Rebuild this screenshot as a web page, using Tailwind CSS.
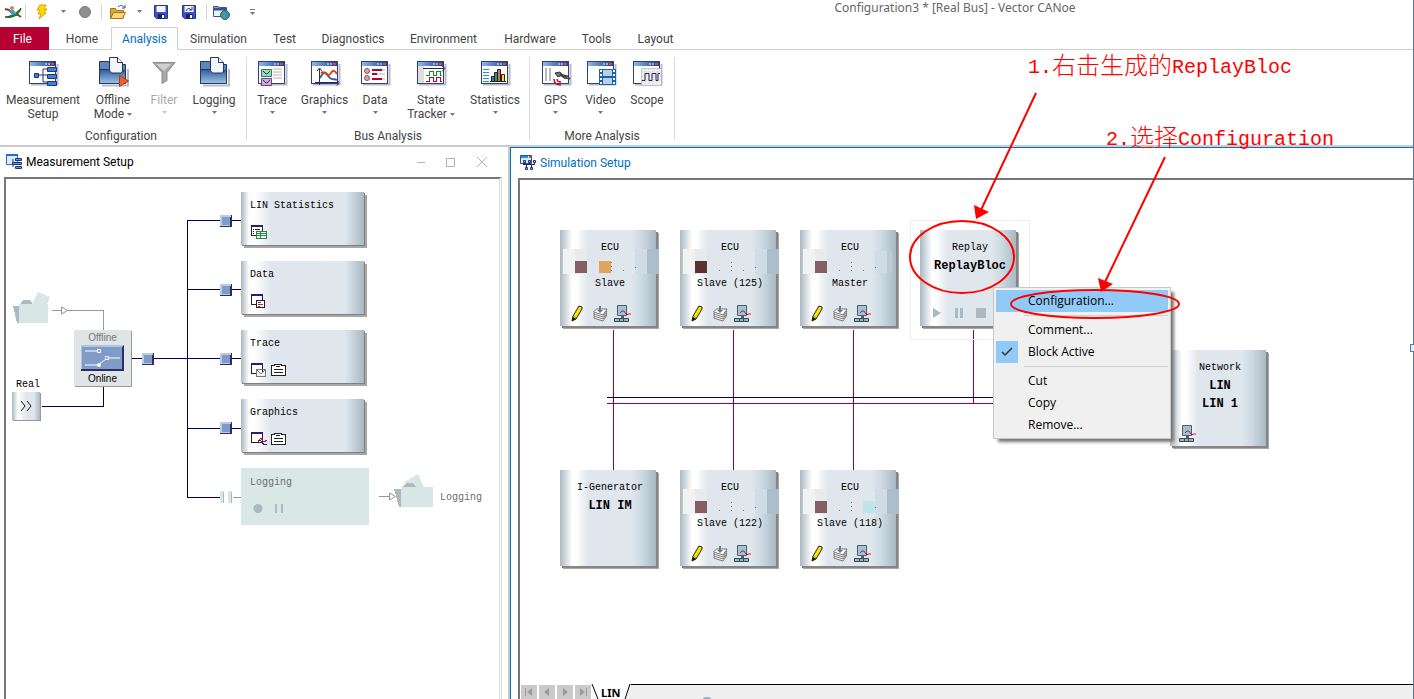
<!DOCTYPE html>
<html lang="en">
  <head>
    <meta charset="utf-8" />
    <meta content="width=device-width, initial-scale=1.0" name="viewport" />
    <title>Configuration3 * [Real Bus] - Vector CANoe</title>
    <script src="https://cdn.jsdelivr.net/npm/@tailwindcss/browser@4"></script>
  </head>
  <body class="relative flex h-screen flex-col overflow-hidden bg-white font-['Roboto',sans-serif] text-[12px] text-[#444]">
    <!-- shared icons -->
    <svg class="absolute h-0 w-0">
      <defs>
        <linearGradient id="bar" x1="0" x2="1">
          <stop offset="0" stop-color="#8fb8ee" />
          <stop offset="1" stop-color="#1c3a8c" />
        </linearGradient>
        <linearGradient id="fold" x1="0" y1="0" x2="0" y2="1">
          <stop offset="0" stop-color="#2f5b9a" />
          <stop offset="1" stop-color="#9cc3e6" />
        </linearGradient>
        <symbol id="caret" viewBox="0 0 5 3"><path d="M0 0h5L2.500 3z" fill="#777" /></symbol>
        <symbol id="win" viewBox="0 0 32 32">
          <path d="M4 27.500h26.500V7" stroke="#b9bcc4" stroke-width="2" fill="none" />
          <rect x="2.500" y="4.500" width="26" height="22" fill="#fff" stroke="#2f3f80" />
          <rect x="3" y="5" width="25" height="4" fill="url(#bar)" />
          <path d="M18 7h2M21 7h2" stroke="#fff" />
          <path d="M24 7h3" stroke="#e8452c" stroke-width="2" />
        </symbol>
        <symbol id="logfolder" viewBox="0 0 32 32">
          <path d="M5 28.500h26V12" stroke="#b9bcc4" stroke-width="2" fill="none" />
          <path d="M2.500 26.500v-22h9l2 3h15v19z" fill="#5c87bd" stroke="#27345f" />
          <path d="M12.500 17V.500h8l5 5V17z" fill="#f4f5f8" stroke="#27345f" />
          <path d="M20.500.500v5h5" fill="#fff" stroke="#27345f" />
          <path d="M2.500 12.500h9l3 3.500h9l5-3.500v14h-26z" fill="url(#fold)" stroke="#27345f" />
        </symbol>
        <symbol id="disk" viewBox="0 0 14 14">
          <path d="M.500.500h13v13H2.500l-2-2z" fill="#3f51c4" stroke="#283593" />
          <path d="M2.500 1h9v6h-9z" fill="#f3f5ff" />
          <path d="M4 9h6.500v5H4z" fill="#1d2360" />
          <path d="M8 10h2v3H8z" fill="#fff" />
        </symbol>
        <symbol id="pencil" viewBox="0 0 12 17">
          <path d="M1 16l1-5L8 1l3 1v2L5 14z" fill="#f7e600" stroke="#222" />
          <path d="M3 11l2 2" stroke="#b59d00" />
          <path d="M1 16l1-4 3 2z" fill="#111" />
        </symbol>
        <symbol id="stack" viewBox="0 0 15 16">
          <g fill="#fff" stroke="#777">
            <path d="M.500 12l3-3H14l-4 6z" />
            <path d="M.500 10l3-3H14l-4 6z" />
            <path d="M.500 8l3-3H14l-4 6z" />
            <path d="M.500 6l3-3H14l-4 6z" />
          </g>
          <path d="M6 0h2v4h2L7 7 4 4h2z" fill="#6f7a80" />
        </symbol>
        <symbol id="pc" viewBox="0 0 17 17">
          <path d="M3.500.500h9v10h-9z" fill="#9cc3d8" stroke="#555d63" />
          <path d="M7 11h3v2H7z" fill="#555d63" />
          <path d="M.500 13.500h14v3H.500zM5.500 13.500h4v3h-4z" fill="#8fb4cc" stroke="#3d4a55" />
          <path d="M6 8l2-2h2l2 3 1 1 1-1h3" fill="none" stroke="#c01838" />
        </symbol>
        <symbol id="folder" viewBox="0 0 38 32">
          <path d="M0 14h6v17H4zM7 13l3-5h7l4 5z" fill="#a9bac2" />
          <path d="M19 12L25 0l12 5-4 10zM6 12h29v19H6z" fill="#d8e6e5" />
        </symbol>
        <symbol id="wsmall" viewBox="0 0 12 11">
          <path d="M.500 1h11v9.500H.500z" fill="#fff" stroke="#222" />
          <path d="M0 1h12" stroke="#2a1f78" stroke-width="2" />
        </symbol>
        <symbol id="filebox" viewBox="0 0 15 12">
          <path d="M.500 1.500h3v-1h7v1h4v10H.500z" fill="#fff" stroke="#222" />
          <path d="M3 5h9M3 8h9M5 2h4" stroke="#222" />
        </symbol>
        <symbol id="tap" viewBox="0 0 12 12">
          <path d="M0 0h12v12H0z" fill="#302c68" />
          <path d="M0 0h11v2h-1v9H0z" fill="#b8cce4" />
          <path d="M1 11h11v1H1z" fill="#302c68" />
          <path d="M2 2h8v8H2z" fill="#809bc8" />
        </symbol>
        <symbol id="mosaic" viewBox="0 0 99 25">
          <path d="M27 2h48v23H27z" fill="#dfe6ec" />
          <path d="M3 0h12v25H3z" fill="#f2f2f3" />
          <path d="M15 0h12v25H15z" fill="#e8ebee" />
          <path d="M75 0h12v25H75z" fill="#d0dce5" />
          <path d="M87 0h12v25H87z" fill="#adbdca" />
          <path d="M39 21h1M51 13h1M51 17h1M51 21h1M63 21h1M75 18h1" stroke="#777" />
        </symbol>
      </defs>
    </svg>

    <header class="flex h-[27px] shrink-0">
      <div class="flex h-[23px] w-[496px] items-center">
        <button class="flex w-[25px] justify-center" aria-label="CANoe">
          <svg class="h-4 w-4.5" viewBox="0 0 18 16">
            <path d="M1 5l4 1 4 4 5 1 3 2" fill="none" stroke="#7a4a22" stroke-width="2" />
            <path d="M1 13c5 0 12-4 16-9-1 6-8 11-16 9z" fill="#2b8a2b" stroke="#1c5c22" />
            <path d="M5 6h5l2 4-4 1z" fill="#4d9ad0" />
            <circle cx="8" cy="4" r="2" fill="#c98a50" />
          </svg>
        </button>
        <span class="h-4 w-px bg-[#d4d4d4]"></span>
        <button class="flex w-8 justify-center" aria-label="Start">
          <svg class="h-4 w-3" viewBox="0 0 12 16"><path d="M4 1h6L8 5h3L8 9h2l-7 6 2-5H2l2-4H1z" fill="#ffd900" stroke="#e0a000" /></svg>
        </button>
        <button class="flex w-2.5 justify-center" aria-label="Start options"><svg class="h-[3px] w-[5px]"><use href="#caret" /></svg></button>
        <button class="flex w-[33px] justify-center" aria-label="Stop"><span class="h-3 w-3 rounded-full border border-[#777] bg-[#8f8f8f]"></span></button>
        <span class="h-4 w-px bg-[#d4d4d4]"></span>
        <button class="flex w-8 justify-center" aria-label="Open">
          <svg class="h-4 w-4.5" viewBox="0 0 18 16">
            <path d="M1.500 14V4.500h5l1 2h7V14z" fill="#e0a63a" stroke="#a87418" />
            <path d="M1.500 14.500l3-6h12l-3 6z" fill="#ffd777" stroke="#a87418" />
            <path d="M9 3c2-2 4-2 6 0M16 1v3h-3" fill="none" stroke="#35507a" />
          </svg>
        </button>
        <button class="flex w-2.5 justify-center" aria-label="Open recent"><svg class="h-[3px] w-[5px]"><use href="#caret" /></svg></button>
        <button class="flex w-[34px] justify-center" aria-label="Save"><svg class="h-3.5 w-3.5"><use href="#disk" /></svg></button>
        <button class="flex w-[22px] justify-center" aria-label="Save as">
          <svg class="h-3.5 w-3.5" viewBox="0 0 14 14">
            <use href="#disk" />
            <path d="M4 6c1-3 4-3 5-1M10 2v3H7" fill="none" stroke="#283593" />
          </svg>
        </button>
        <span class="ml-1.5 h-4 w-px bg-[#d4d4d4]"></span>
        <button class="flex w-[30px] justify-center" aria-label="Options">
          <svg class="h-4 w-4.5" viewBox="0 0 18 16">
            <path d="M.500 12.500v-10h5l1 1h7v9z" fill="#eaf2fb" stroke="#34568c" />
            <path d="M1 5h12" stroke="#34568c" stroke-width="3" />
            <circle cx="12" cy="11" r="4.500" fill="#3f86cc" stroke="#2a5a8e" />
            <path d="M10 8l3 1-1 3 2 2-3 1-2-4z" fill="#4caa48" />
          </svg>
        </button>
        <button class="flex w-[30px] justify-center" aria-label="Customize">
          <svg class="h-1.5 w-[5px]" viewBox="0 0 5 6"><path d="M0 0h5v1H0zM0 3h5L2.500 6z" fill="#777" /></svg>
        </button>
      </div>
      <h1 class="flex-1 text-center font-['Noto_Sans',sans-serif] leading-[15px] text-[#666]">Configuration3 * [Real Bus] - Vector CANoe</h1>
    </header>

    <nav class="flex h-[23px] shrink-0 border-b border-[#d0d0d0] text-center leading-[25px]">
      <a href="#" class="mr-1 h-[23px] w-[49px] bg-[#b70032] pr-1 text-white">File</a>
      <a href="#" class="w-[58px]">Home</a>
      <a href="#" class="h-[23px] w-[67px] border border-b-0 border-[#d0d0d0] bg-white leading-[23px] text-[#0070c0]">Analysis</a>
      <a href="#" class="w-[81px]">Simulation</a>
      <a href="#" class="w-[51px]">Test</a>
      <a href="#" class="w-[86px]">Diagnostics</a>
      <a href="#" class="w-[95px]">Environment</a>
      <a href="#" class="w-[78px]">Hardware</a>
      <a href="#" class="w-[55px]">Tools</a>
      <a href="#" class="w-[63px]">Layout</a>
    </nav>

    <section class="flex h-[97px] shrink-0 border-b-2 border-[#cdcdcd] pt-[7px] leading-[14px]">
      <div class="flex h-[83px] w-[247px] flex-col justify-between border-r border-[#ddd]">
        <div class="flex items-start">
          <button class="flex w-[86px] flex-col items-center gap-1">
            <svg class="h-8 w-8" viewBox="0 0 32 32">
              <use href="#win" />
              <path d="M8 18h13M16 12v13M16 12h5M16 25h5" stroke="#27346b" fill="none" />
              <path d="M7.500 16.500h4v4h-4zM20.500 10.500h9v4h-9zM20.500 17.500h9v4h-9zM20.500 24.500h9v4h-9z" fill="#3d7fd0" stroke="#27346b" />
            </svg>
            <span>Measurement<br />Setup</span>
          </button>
          <button class="flex w-[54px] flex-col items-center gap-1">
            <svg class="h-8 w-8" viewBox="0 0 32 32">
              <use href="#logfolder" />
              <path d="M22.500 18.500v11l9-5.500z" fill="#f0602c" stroke="#b03a14" />
            </svg>
            <span>Offline<br />Mode <svg class="inline h-[3px] w-[5px]"><use href="#caret" /></svg></span>
          </button>
          <button class="flex w-12 flex-col items-center gap-1 text-[#aaa]">
            <svg class="h-8 w-8" viewBox="0 0 32 32">
              <path d="M5 5.500h22l-8 10v8l-5 3v-11z" fill="#a8a8a8" stroke="#8c8c8c" />
              <path d="M8 7h15l-7 7z" fill="#d0d0d0" />
            </svg>
            <span>Filter</span>
            <svg class="h-[3px] w-[5px] opacity-40"><use href="#caret" /></svg>
          </button>
          <button class="flex w-[52px] flex-col items-center gap-1">
            <svg class="h-8 w-8"><use href="#logfolder" /></svg>
            <span>Logging</span>
            <svg class="h-[3px] w-[5px]"><use href="#caret" /></svg>
          </button>
        </div>
        <div class="pr-1 text-center leading-2">Configuration</div>
      </div>

      <div class="flex h-[83px] w-[283px] flex-col justify-between border-r border-[#ddd]">
        <div class="flex items-start">
          <button class="flex w-[50px] flex-col items-center gap-1">
            <svg class="h-8 w-8" viewBox="0 0 32 32">
              <use href="#win" />
              <path d="M17 12h9M17 15h9M17 18h9M17 21h9" stroke="#d8d8d8" stroke-width="2" />
              <path d="M5.500 12.500h10v7h-10z" fill="#9fd8bc" stroke="#27805c" />
              <path d="M5.500 21.500h10v7h-10z" fill="#cbb0dc" stroke="#6c3f88" />
              <path d="M7 14l3 3h1l3-3M7 23l3 3h1l3-3" fill="none" stroke="#333" />
            </svg>
            <span>Trace</span>
            <svg class="h-[3px] w-[5px]"><use href="#caret" /></svg>
          </button>
          <button class="flex w-[55px] flex-col items-center gap-1">
            <svg class="h-8 w-8" viewBox="0 0 32 32">
              <use href="#win" />
              <path d="M10.500 28V12M8 14l2.500-3 2.500 3M6 25.500h23M28 23l2 2.500-2 3" fill="none" stroke="#27275c" />
              <path d="M11 21c5-9 6-5 9-1s5 1 8 3" fill="none" stroke="#3a5d9c" stroke-width="2" />
              <path d="M12 16c4-4 6 6 10 0 2-4 4-2 6 1" fill="none" stroke="#d8401c" stroke-width="2" />
            </svg>
            <span>Graphics</span>
            <svg class="h-[3px] w-[5px]"><use href="#caret" /></svg>
          </button>
          <button class="flex w-[46px] flex-col items-center gap-1">
            <svg class="h-8 w-8" viewBox="0 0 32 32">
              <use href="#win" />
              <path d="M13 13h13M13 17h13M13 22h13" stroke="#d8d8d8" stroke-width="2" />
              <path d="M13 13h10M13 17h5M13 22h10" stroke="#b70032" stroke-width="2" />
              <circle cx="8" cy="14" r="2.500" fill="#c9b0b0" stroke="#a24b4b" />
              <circle cx="8" cy="21" r="2.500" fill="#c9b0b0" stroke="#a24b4b" />
            </svg>
            <span>Data</span>
            <svg class="h-[3px] w-[5px]"><use href="#caret" /></svg>
          </button>
          <button class="flex w-[66px] flex-col items-center gap-1">
            <svg class="h-8 w-8" viewBox="0 0 32 32">
              <use href="#win" />
              <path d="M3 9h6v17H3z" fill="#ddd" />
              <path d="M8 11.500h21M27 9l3 2.500-3 3" fill="none" stroke="#27275c" />
              <g fill="none" shape-rendering="crispEdges">
                <path d="M11 18.500h3v-4h4v4h3v-4h4v4h2" stroke="#0a9a0a" />
                <path d="M11 24.500h3v-4h4v4h3v-4h4v4h2" stroke="#c00030" />
              </g>
            </svg>
            <span>State<br />Tracker <svg class="inline h-[3px] w-[5px]"><use href="#caret" /></svg></span>
          </button>
          <button class="flex w-[62px] flex-col items-center gap-1">
            <svg class="h-8 w-8" viewBox="0 0 32 32">
              <use href="#win" />
              <path d="M4 12.500h6M4 15.500h6M4 18.500h6M4 21.500h6M4 24.500h6" stroke="#1f8fe8" />
              <path d="M11 24.500h16" stroke="#222" />
              <path d="M12.500 19.500h3v5h-3z" fill="#3c78d0" stroke="#222" />
              <path d="M15.500 15.500h3v9h-3z" fill="#2f9c4a" stroke="#222" />
              <path d="M18.500 12.500h3v12h-3z" fill="#cf6a80" stroke="#222" />
              <path d="M22.500 17.500h3v7h-3z" fill="#ffe000" stroke="#222" />
            </svg>
            <span>Statistics</span>
            <svg class="h-[3px] w-[5px]"><use href="#caret" /></svg>
          </button>
        </div>
        <div class="text-center leading-2">Bus Analysis</div>
      </div>

      <div class="flex h-[83px] w-[145px] flex-col justify-between border-r border-[#ddd]">
        <div class="flex items-start">
          <button class="flex w-[51px] flex-col items-center gap-1">
            <svg class="h-8 w-8" viewBox="0 0 32 32">
              <use href="#win" />
              <path d="M5 11h2v13H5zM9 11h2v13H9z" fill="#b8b8b8" />
              <path d="M15 16l5-1 2 3-4 2zM23 18l5 1 2 3-5-1z" fill="#777" stroke="#333" />
              <path d="M20 17l6 4" stroke="#444" stroke-width="3" />
              <path d="M14 22c0 4 3 6 7 6M17 22c0 2 1 3 4 3" fill="none" stroke="#c8102e" stroke-width="1.500" />
            </svg>
            <span>GPS</span>
            <svg class="h-[3px] w-[5px]"><use href="#caret" /></svg>
          </button>
          <button class="flex w-[39px] flex-col items-center gap-1">
            <svg class="h-8 w-8" viewBox="0 0 32 32">
              <use href="#win" />
              <path d="M14 12h17v16H14z" fill="#1762b4" />
              <path d="M18 13h9v6h-9zM18 21h9v6h-9z" fill="#bcd0e4" />
              <path d="M16 13v15M29 13v15" stroke="#fff" stroke-width="2" stroke-dasharray="2 2" />
            </svg>
            <span>Video</span>
            <svg class="h-[3px] w-[5px]"><use href="#caret" /></svg>
          </button>
          <button class="flex w-[54px] flex-col items-center gap-1">
            <svg class="h-8 w-8" viewBox="0 0 32 32">
              <use href="#win" />
              <path d="M10.500 11.500h20v17h-20z" fill="#f1f1f1" stroke="#999" stroke-dasharray="1 1" />
              <path d="M14 12v16M18 12v16M22 12v16M26 12v16M11 15h19M11 19h19M11 23h19" stroke="#ccc" stroke-dasharray="1 1" />
              <path d="M11 23.500h3v-7h4v7h3v-7h4v7h2v-7h2" fill="none" stroke="#27275c" />
            </svg>
            <span>Scope</span>
          </button>
        </div>
        <div class="text-center leading-2">More Analysis</div>
      </div>
    </section>

    <main class="flex min-h-0 flex-1">
      <section class="flex w-[510px] shrink-0 flex-col border-r-2 border-[#c8c8c8]">
        <div class="flex h-[30px] items-center gap-1 pl-1.5 text-black">
          <svg class="h-4 w-4" viewBox="0 0 16 16">
            <path d="M.500.500h11v10H.500z" fill="#d6ecff" stroke="#2b6cc4" />
            <path d="M0 1h12" stroke="#2b6cc4" stroke-width="2" />
            <path d="M7 5v8M7 9h2" stroke="#27346b" />
            <path d="M9.500 4.500h6v2h-6zM6.500 8.500h9v2h-9zM9.500 12.500h6v2h-6z" fill="#5f9be0" stroke="#27346b" />
          </svg>
          <h2 class="flex-1">Measurement Setup</h2>
          <div class="flex w-[91px] items-center gap-[21px] text-[#aaa]">
            <button class="h-px w-2 bg-[#b5b5b5]" aria-label="Minimize"></button>
            <button class="h-[9px] w-[9px] border border-[#b5b5b5]" aria-label="Maximize"></button>
            <button aria-label="Close">
              <svg class="h-3 w-3" viewBox="0 0 12 12"><path d="M1 1l10 10M11 1L1 11" stroke="#b5b5b5" /></svg>
            </button>
          </div>
        </div>
        <div class="relative mr-1.5 ml-1 flex-1 border-t-2 border-r-3 border-l-2 border-t-[#777] border-r-[#ddd] border-l-[#777] [border-right-style:double] font-['Liberation_Mono',monospace] text-[10px] text-black">
          <svg class="absolute inset-0 h-full w-full" shape-rendering="crispEdges">
            <g transform="translate(-6 -179)">
              <g fill="none" stroke="#000060" transform="translate(.500 .500)">
                <path d="M241 220H187V497h33M187 289h54M131 358h110M187 428h54M41 406h62v-20" />
                <path d="M51 310h52v20M232 497h9M378 496h12" stroke="#999" />
              </g>
              <path d="M61.500 307v7l6-3.500zM389.500 493v7l6-3.500z" fill="#fff" stroke="#8b959c" shape-rendering="auto" />
              <use href="#tap" x="220" y="215" width="12" height="12" />
              <use href="#tap" x="220" y="284" width="12" height="12" />
              <use href="#tap" x="220" y="353" width="12" height="12" />
              <use href="#tap" x="220" y="422" width="12" height="12" />
              <use href="#tap" x="142" y="353" width="12" height="12" />
              <path d="M220 491h4v12h-4zM228 491h4v12h-4z" fill="#d8e6e5" />
              <path d="M223 492h1v11h-1zM231 492h1v11h-1z" fill="#a9bac2" />
              <use href="#folder" x="13" y="292" width="38" height="32" />
              <path d="M394 489h7v18h-2zM403 487l3-4h9l4 4z" fill="#a9bac2" />
              <path d="M403 483l15-9 6 13h-8l-3-4h-7zM401 487h32v20h-32z" fill="#d8e6e5" />
            </g>
          </svg>

          <span class="absolute top-[200px] left-[10px] leading-3">Real</span>
          <button class="absolute top-[213px] left-[6px] flex h-7 w-7 items-center justify-center bg-[linear-gradient(90deg,#a9b8c2,#fff_6px,#e0e6ed_14px,#dfe6ec_22px,#a9b8c2)] shadow-[1px_1px_0_#999]" aria-label="Real bus">
            <svg class="h-3 w-3" viewBox="0 0 12 12"><path d="M1 1l4 5-4 5M7 1l4 5-4 5" fill="none" stroke="#111" /></svg>
          </button>
          <button class="absolute top-[151px] left-[68px] flex h-14 w-[57px] flex-col items-center justify-between bg-[#dfe4e6] font-['Liberation_Sans',sans-serif] leading-[15px] shadow-[1px_1px_0_#999]">
            <span class="text-[#777]">Offline</span>
            <svg class="h-[26px] w-[43px]" viewBox="0 0 43 26">
              <path d="M0 0h43v26H0z" fill="#302c68" />
              <path d="M0 0h43l-2 2v22H0z" fill="#b0c4e0" />
              <path d="M1 2h40v22H1z" fill="#809bc8" />
              <path d="M4 6h12M28 13h11M4 20h13l8-6" fill="none" stroke="#fff" />
              <path d="M16.500 4.500h3v3h-3zM24.500 11.500h3v3h-3z" fill="#809bc8" stroke="#fff" />
              <circle cx="18" cy="20" r="2" fill="#fff" />
            </svg>
            <span>Online</span>
          </button>

          <button class="absolute top-[13px] left-[235px] flex h-[53px] w-[123px] flex-col justify-between bg-[linear-gradient(90deg,#a9b8c2,#fff_8px,#fff_14px,#e0e6ed_30px,#dfe6ec_104px,#ccd9e2_110px,#a9b8c2)] px-[9px] pt-2 pb-1 text-left leading-3 shadow-[1px_1px_0_#808080,3px_3px_0_#aaa6a3]">
            <span>LIN Statistics</span>
            <svg class="h-4 w-[34px]" viewBox="0 0 34 16" shape-rendering="crispEdges">
              <use href="#wsmall" x="1" width="12" height="11" />
              <path d="M3 4.500h1M5 4.500h5M3 6.500h1M3 8.500h1" stroke="#222" />
              <path d="M6.500 6.500h10v7h-10zM6.500 8.500h10M6.500 10.500h10M10.500 6.500v7" fill="#fff" stroke="#1f8a3a" />
            </svg>
          </button>
          <button class="absolute top-[82px] left-[235px] flex h-[53px] w-[123px] flex-col justify-between bg-[linear-gradient(90deg,#a9b8c2,#fff_8px,#fff_14px,#e0e6ed_30px,#dfe6ec_104px,#ccd9e2_110px,#a9b8c2)] px-[9px] pt-2 pb-1 text-left leading-3 shadow-[1px_1px_0_#808080,3px_3px_0_#aaa6a3]">
            <span>Data</span>
            <svg class="h-4 w-[34px]" viewBox="0 0 34 16" shape-rendering="crispEdges">
              <use href="#wsmall" x="1" width="12" height="11" />
              <path d="M6.500 6.500h8v7h-8z" fill="#fff" stroke="#222" />
              <path d="M8 8.500h3M8 10.500h5M8 12.500h2" stroke="#b02840" />
            </svg>
          </button>
          <button class="absolute top-[151px] left-[235px] flex h-[53px] w-[123px] flex-col justify-between bg-[linear-gradient(90deg,#a9b8c2,#fff_8px,#fff_14px,#e0e6ed_30px,#dfe6ec_104px,#ccd9e2_110px,#a9b8c2)] px-[9px] pt-2 pb-1 text-left leading-3 shadow-[1px_1px_0_#808080,3px_3px_0_#aaa6a3]">
            <span>Trace</span>
            <svg class="h-4 w-[38px]" viewBox="0 0 38 16" shape-rendering="crispEdges">
              <use href="#wsmall" x="1" width="12" height="11" />
              <path d="M6.500 6.500h9v7h-9zM7 7l4 4 4-4" fill="#f2f2f2" stroke="#777" />
              <use href="#filebox" x="21" y="1" width="15" height="12" />
            </svg>
          </button>
          <button class="absolute top-[220px] left-[235px] flex h-[53px] w-[123px] flex-col justify-between bg-[linear-gradient(90deg,#a9b8c2,#fff_8px,#fff_14px,#e0e6ed_30px,#dfe6ec_104px,#ccd9e2_110px,#a9b8c2)] px-[9px] pt-2 pb-1 text-left leading-3 shadow-[1px_1px_0_#808080,3px_3px_0_#aaa6a3]">
            <span>Graphics</span>
            <svg class="h-4 w-[38px]" viewBox="0 0 38 16" shape-rendering="crispEdges">
              <use href="#wsmall" x="1" width="12" height="11" />
              <path d="M8 10l3-4 3 4 3-2" fill="none" stroke="#c01838" />
              <path d="M8 8l3 1 3 4 3-1" fill="none" stroke="#2a1f78" />
              <use href="#filebox" x="21" y="1" width="15" height="12" />
            </svg>
          </button>
          <button class="absolute top-[289px] left-[235px] flex h-[57px] w-32 flex-col justify-between bg-[#d9e7e5] px-[9px] pt-[9px] pb-3 text-left leading-3 text-[#6b7070]">
            <span>Logging</span>
            <svg class="h-[9px] w-[34px]" viewBox="0 0 34 9" fill="#a9bac2"><circle cx="8" cy="4.500" r="4.500" /><path d="M25 0h2v9h-2zM31 0h2v9h-2z" /></svg>
          </button>
          <span class="absolute top-[313px] left-[434px] leading-3 text-[#6b7070]">Logging</span>
        </div>
      </section>

      <section class="flex min-w-0 flex-1 flex-col border-t border-l border-[#0070c0]">
        <div class="flex h-[30px] shrink-0 items-center gap-1 pl-[9px] text-[#0070c0]">
          <svg class="h-4 w-4" viewBox="0 0 16 16">
            <path d="M.500.500h11v8H.500z" fill="#d6ecff" stroke="#2b4c94" />
            <path d="M1 2h7" stroke="#2b8ce4" stroke-width="2" />
            <path d="M9 2h2" stroke="#e8452c" stroke-width="2" />
            <path d="M3 9.500h12M4.500 6v4M9.500 6v4M14.500 6v4M6.500 10v4M11.500 10v4" stroke="#27275c" />
            <path d="M3.500 5.500h2v2h-2zM8.500 5.500h2v2h-2zM13.500 5.500h2v2h-2zM5.500 12.500h2v2h-2zM10.500 12.500h2v2h-2z" fill="#a9b8dc" stroke="#27346b" />
          </svg>
          <h2>Simulation Setup</h2>
        </div>
        <div class="ml-[7px] flex min-h-0 flex-1 flex-col border-t-2 border-l-2 border-[#777]">
          <div class="relative min-h-0 flex-1 overflow-hidden font-['Liberation_Mono',monospace] text-[10px] leading-[18px] text-black">
            <svg class="absolute inset-0 h-full w-full" shape-rendering="crispEdges">
              <g transform="translate(-519.500 -179.500)" fill="none" stroke="#a8002e">
                <path d="M613 329v142M733 329v142M853 329v142M973 329v74M606 403h400" />
                <path d="M606 397h400" stroke="#000060" />
              </g>
            </svg>

            <button class="absolute top-[50px] left-[40px] flex h-24 w-24 flex-col items-center bg-[linear-gradient(90deg,#a9b8c2,#fff_12px,#fff_16px,#e0e6ed_28px,#dfe6ec_72px,#ccd9e2_82px,#a9b8c2)] pt-[9px] pl-1 shadow-[2px_2px_0_#858585,3px_3px_0_#aaa6a3]">
              <span>ECU</span>
              <svg class="absolute top-[19px] left-0 h-[25px] w-[99px]" viewBox="0 0 99 25" shape-rendering="crispEdges"><use href="#mosaic" /><path d="M15 12h12v12H15z" fill="#855f64" /><path d="M39 12h12v12H39z" fill="#dfa45d" /></svg>
              <span class="mt-[18px]">Slave</span>
              <span class="absolute bottom-1 left-[11px] flex items-center gap-2.5">
                <svg class="h-[17px] w-3"><use href="#pencil" /></svg>
                <svg class="h-4 w-[15px]"><use href="#stack" /></svg>
                <svg class="-ml-1 h-[17px] w-[17px]"><use href="#pc" /></svg>
              </span>
            </button>
            <button class="absolute top-[50px] left-[160px] flex h-24 w-24 flex-col items-center bg-[linear-gradient(90deg,#a9b8c2,#fff_12px,#fff_16px,#e0e6ed_28px,#dfe6ec_72px,#ccd9e2_82px,#a9b8c2)] pt-[9px] pl-1 shadow-[2px_2px_0_#858585,3px_3px_0_#aaa6a3]">
              <span>ECU</span>
              <svg class="absolute top-[19px] left-0 h-[25px] w-[99px]" viewBox="0 0 99 25" shape-rendering="crispEdges"><use href="#mosaic" /><path d="M15 12h12v12H15z" fill="#5a3236" /></svg>
              <span class="mt-[18px]">Slave (125)</span>
              <span class="absolute bottom-1 left-[11px] flex items-center gap-2.5">
                <svg class="h-[17px] w-3"><use href="#pencil" /></svg>
                <svg class="h-4 w-[15px]"><use href="#stack" /></svg>
                <svg class="-ml-1 h-[17px] w-[17px]"><use href="#pc" /></svg>
              </span>
            </button>
            <button class="absolute top-[50px] left-[280px] flex h-24 w-24 flex-col items-center bg-[linear-gradient(90deg,#a9b8c2,#fff_12px,#fff_16px,#e0e6ed_28px,#dfe6ec_72px,#ccd9e2_82px,#a9b8c2)] pt-[9px] pl-1 shadow-[2px_2px_0_#858585,3px_3px_0_#aaa6a3]">
              <svg class="absolute top-[19px] left-0 h-[25px] w-[92px]" viewBox="0 0 92 25" shape-rendering="crispEdges"><path d="M3 0h12v25H3z" fill="#f2f2f3" /><path d="M15 0h12v12H15z" fill="#e8ebee" /><path d="M75 2h12v22H75z" fill="#d0dce5" /><path d="M87 2h5v22h-5z" fill="#bdcad4" /><path d="M39 21h1M51 13h1M51 17h1M51 21h1M63 21h1M75 18h1" stroke="#777" /><path d="M15 12h12v12H15z" fill="#855f64" /></svg>
              <span class="relative">ECU</span>
              <span class="mt-[18px]">Master</span>
              <span class="absolute bottom-1 left-[11px] flex items-center gap-2.5">
                <svg class="h-[17px] w-3"><use href="#pencil" /></svg>
                <svg class="h-4 w-[15px]"><use href="#stack" /></svg>
                <svg class="-ml-1 h-[17px] w-[17px]"><use href="#pc" /></svg>
              </span>
            </button>

            <div class="absolute top-[40px] left-[390px] h-[120px] w-[120px] border border-[#eee]"></div>
            <button class="absolute top-[50px] left-[400px] flex h-24 w-24 flex-col items-center bg-[linear-gradient(90deg,#a9b8c2,#fff_12px,#fff_16px,#e0e6ed_28px,#dfe6ec_72px,#ccd9e2_82px,#a9b8c2)] pt-[9px] pl-1 shadow-[2px_2px_0_#858585,3px_3px_0_#aaa6a3]">
              <span>Replay</span>
              <span class="text-[12px] font-bold">ReplayBloc</span>
              <svg class="absolute bottom-2 left-3 h-2.5 w-[54px]" viewBox="0 0 54 10" fill="#a9bac2"><path d="M1 0l8 5-8 5zM23 0h3v10h-3zM28 0h3v10h-3zM44 0h10v10H44z" /></svg>
            </button>
            <button class="absolute top-[170px] left-[650px] flex h-24 w-24 flex-col items-center bg-[linear-gradient(90deg,#a9b8c2,#fff_12px,#fff_16px,#e0e6ed_28px,#dfe6ec_72px,#ccd9e2_82px,#a9b8c2)] pt-[9px] pl-1 shadow-[2px_2px_0_#858585,3px_3px_0_#aaa6a3]">
              <span>Network</span>
              <span class="text-[12px] font-bold">LIN</span>
              <span class="text-[12px] font-bold">LIN 1</span>
              <svg class="absolute bottom-1 left-[9px] h-[17px] w-[17px]"><use href="#pc" /></svg>
            </button>

            <button class="absolute top-[290px] left-[40px] flex h-24 w-24 flex-col items-center bg-[linear-gradient(90deg,#a9b8c2,#fff_12px,#fff_16px,#e0e6ed_28px,#dfe6ec_72px,#ccd9e2_82px,#a9b8c2)] pt-[9px] pl-1 shadow-[2px_2px_0_#858585,3px_3px_0_#aaa6a3]">
              <span>I-Generator</span>
              <span class="text-[12px] font-bold">LIN IM</span>
            </button>
            <button class="absolute top-[290px] left-[160px] flex h-24 w-24 flex-col items-center bg-[linear-gradient(90deg,#a9b8c2,#fff_12px,#fff_16px,#e0e6ed_28px,#dfe6ec_72px,#ccd9e2_82px,#a9b8c2)] pt-[9px] pl-1 shadow-[2px_2px_0_#858585,3px_3px_0_#aaa6a3]">
              <span>ECU</span>
              <svg class="absolute top-[19px] left-0 h-[25px] w-[99px]" viewBox="0 0 99 25" shape-rendering="crispEdges"><use href="#mosaic" /><path d="M15 12h12v12H15z" fill="#855f64" /></svg>
              <span class="mt-[18px]">Slave (122)</span>
              <span class="absolute bottom-1 left-[11px] flex items-center gap-2.5">
                <svg class="h-[17px] w-3"><use href="#pencil" /></svg>
                <svg class="h-4 w-[15px]"><use href="#stack" /></svg>
                <svg class="-ml-1 h-[17px] w-[17px]"><use href="#pc" /></svg>
              </span>
            </button>
            <button class="absolute top-[290px] left-[280px] flex h-24 w-24 flex-col items-center bg-[linear-gradient(90deg,#a9b8c2,#fff_12px,#fff_16px,#e0e6ed_28px,#dfe6ec_72px,#ccd9e2_82px,#a9b8c2)] pt-[9px] pl-1 shadow-[2px_2px_0_#858585,3px_3px_0_#aaa6a3]">
              <span>ECU</span>
              <svg class="absolute top-[19px] left-0 h-[25px] w-[99px]" viewBox="0 0 99 25" shape-rendering="crispEdges"><use href="#mosaic" /><path d="M15 12h12v12H15z" fill="#855f64" /><path d="M63 12h12v12H63z" fill="#bfe5ea" /></svg>
              <span class="mt-[18px]">Slave (118)</span>
              <span class="absolute bottom-1 left-[11px] flex items-center gap-2.5">
                <svg class="h-[17px] w-3"><use href="#pencil" /></svg>
                <svg class="h-4 w-[15px]"><use href="#stack" /></svg>
                <svg class="-ml-1 h-[17px] w-[17px]"><use href="#pc" /></svg>
              </span>
            </button>

            <!-- context menu of the replay block -->
            <div class="absolute top-[107px] left-[473px] flex w-[178px] flex-col border border-[#c8c8c8] bg-[#f0f0f0] p-0.5 font-['Open_Sans',sans-serif] text-[12px] leading-[22px] shadow-[4px_4px_3px_-1px_#777]">
              <button class="h-[22px] bg-[#91c9f7] pl-8 text-left">Configuration...</button>
              <div class="my-[3px] ml-7 h-px bg-[#d0d0d0]"></div>
              <button class="h-[22px] pl-8 text-left">Comment...</button>
              <button class="flex h-[22px] gap-2.5 text-left">
                <span class="flex h-[22px] w-[22px] items-center justify-center bg-[#91c9f7]">
                  <svg class="h-2.5 w-3" viewBox="0 0 12 10"><path d="M1 5l3 3 7-7" fill="none" stroke="#333" stroke-width="1.500" /></svg>
                </span>
                Block Active
              </button>
              <div class="my-[3px] ml-7 h-px bg-[#d0d0d0]"></div>
              <button class="h-[22px] pl-8 text-left">Cut</button>
              <button class="h-[22px] pl-8 text-left">Copy</button>
              <button class="h-[22px] pl-8 text-left">Remove...</button>
            </div>
          </div>

          <div class="flex h-[15px] shrink-0 text-black">
            <div class="flex gap-0.5 pt-px pl-px">
              <button class="flex h-3.5 w-4 items-center justify-center bg-[#cacaca]" aria-label="First"><svg class="h-2 w-2" viewBox="0 0 8 8" fill="#9a9a9a"><path d="M0 0h1v8H0zM7 0v8L2 4z" /></svg></button>
              <button class="flex h-3.5 w-4 items-center justify-center bg-[#cacaca]" aria-label="Previous"><svg class="h-2 w-2" viewBox="0 0 8 8" fill="#9a9a9a"><path d="M6 0v8L1 4z" /></svg></button>
              <button class="flex h-3.5 w-4 items-center justify-center bg-[#cacaca]" aria-label="Next"><svg class="h-2 w-2" viewBox="0 0 8 8" fill="#9a9a9a"><path d="M2 0v8l5-4z" /></svg></button>
              <button class="flex h-3.5 w-4 items-center justify-center bg-[#cacaca]" aria-label="Last"><svg class="h-2 w-2" viewBox="0 0 8 8" fill="#9a9a9a"><path d="M1 0v8l5-4zM7 0h1v8H7z" /></svg></button>
            </div>
            <svg class="h-[15px] w-2" viewBox="0 0 8 15"><path d="M1 0l6 15" stroke="#000" /></svg>
            <a href="#" class="ml-0.5 w-[22px] font-['Noto_Sans',sans-serif] text-[11px] leading-[18px] font-bold">LIN</a>
            <svg class="h-[15px] w-2" viewBox="0 0 8 15"><path d="M2 15L7 0h1v15z" fill="#efefef" /><path d="M2 15L7 0" stroke="#000" /></svg>
            <div class="relative flex-1 border-t border-black bg-[#efefef]">
              <span class="absolute bottom-0 left-[72px] h-0.5 w-2 rounded-t bg-[#9fb3c8]"></span>
            </div>
          </div>
        </div>
      </section>
    </main>

    <!-- window edge with its resize handle -->
    <div class="absolute top-0 right-0 h-full w-px bg-[#5a7a9c]"></div>
    <div class="absolute top-[344px] right-0 h-2 w-1 border border-r-0 border-[#5a7a9c] bg-[#d8f4fa]"></div>

    <!-- red notes -->
    <div class="pointer-events-none absolute inset-0 font-['Liberation_Mono','Noto_Sans_CJK_SC',monospace] text-[20px] leading-7 text-[#f00]">
      <svg class="absolute inset-0 h-full w-full">
        <g fill="none" stroke="#f00" stroke-width="2">
          <ellipse cx="962" cy="257" rx="52" ry="36" />
          <ellipse cx="1095" cy="304" rx="84" ry="14" />
          <path d="M1036 93L981 210M1165 157L1105 282" />
        </g>
        <path d="M976 219l-2-14 15 7zM1101 292l-3-14 15 6z" fill="#f00" />
      </svg>
      <p class="absolute top-[54px] left-[1028px] flex whitespace-nowrap">1.<span class="text-[24px] font-light">右击生成的</span>ReplayBloc</p>
      <p class="absolute top-[126px] left-[1106px] flex whitespace-nowrap">2.<span class="text-[24px] font-light">选择</span>Configuration</p>
    </div>
  </body>
</html>
